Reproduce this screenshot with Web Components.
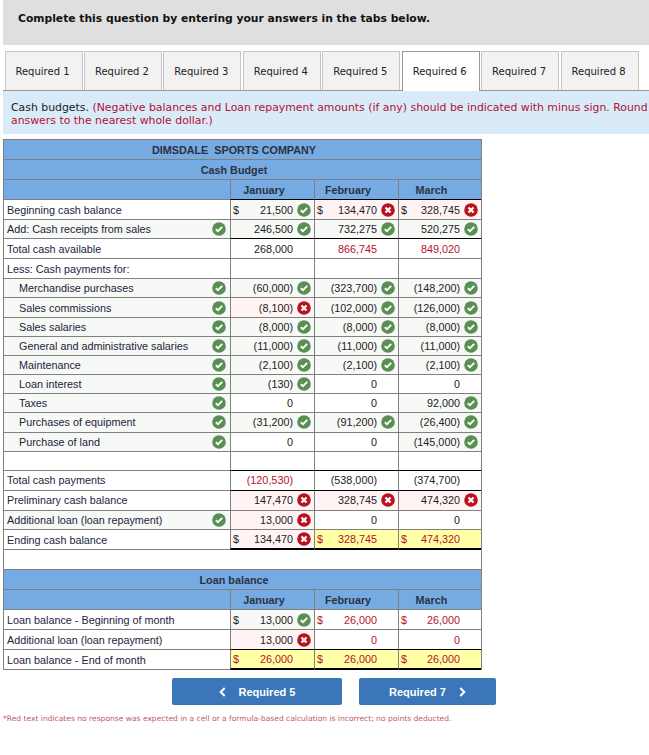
<!DOCTYPE html>
<html>
<head>
<meta charset="utf-8">
<style>
  html, body { margin: 0; padding: 0; background: #fff; overflow: hidden; }
  body { width: 649px; height: 755px; }
</style>
</head>
<body>
<quiz-page>
  <span slot="prompt">Complete this question by entering your answers in the tabs below.</span>
  <tab-bar slot="tabs" active="6" count="8"></tab-bar>
  <instruction-band slot="band" lead="Cash budgets."><span>(Negative balances and Loan repayment amounts (if any) should be indicated with minus sign. Round<br>answers to the nearest whole dollar.)</span></instruction-band>
  <budget-sheet slot="sheet"></budget-sheet>
  <nav-button slot="prev" dir="prev" style="width:170px">Required 5</nav-button>
  <nav-button slot="next" dir="next" style="width:137px">Required 7</nav-button>
  <span slot="note">*Red text indicates no response was expected in a cell or a formula-based calculation is incorrect; no points deducted.</span>
</quiz-page>

<script>
class StatusMark extends HTMLElement {
  connectedCallback() {
    if (this.shadowRoot) return;
    this.attachShadow({ mode: "open" });
    const ok = this.getAttribute("kind") === "ok";
    this.shadowRoot.innerHTML = `
    <style>
      :host { display: block; width: 14px; height: 14px; flex: none; }
      svg { display: block; }
    </style>
    <svg width="14" height="14" viewBox="0 0 14 14">
      <circle cx="7" cy="7" r="6.8" fill="${ok ? "#5a8f54" : "#b8121f"}"/>
      ${ok
        ? '<path d="M3.8 7.2 6 9.2 10.2 4.9" fill="none" stroke="#fff" stroke-width="1.9"/>'
        : '<path d="M4.5 4.5 9.5 9.5M9.5 4.5 4.5 9.5" fill="none" stroke="#fff" stroke-width="2.2"/>'}
    </svg>`;
  }
}
customElements.define("status-mark", StatusMark);

class TabBar extends HTMLElement {
  connectedCallback() {
    this.attachShadow({ mode: "open" });
    const active = +this.getAttribute("active");
    let tabs = "";
    for (let i = 1; i <= +this.getAttribute("count"); i++) {
      tabs += `<div class="tab${i === active ? " on" : ""}">Required ${i}</div>`;
    }
    this.shadowRoot.innerHTML = `
    <style>
      :host {
        display: flex;
        gap: 1.45px;
        height: 40px;
        box-sizing: border-box;
        padding-left: 1.5px;
        border-bottom: 1px solid #999;
        font: 10px "DejaVu Sans", sans-serif;
        color: #222;
      }
      .tab {
        width: 78px;
        height: 39px;
        box-sizing: border-box;
        display: flex;
        align-items: center;
        justify-content: center;
        padding-right: 2px;
        background: #f2f2f2;
        border: 1px solid #c6c6c6;
        border-bottom: 0;
      }
      .on {
        height: 40px;
        background: #fff;
        border-color: #999;
        z-index: 1;
      }
    </style>
    ${tabs}`;
  }
}
customElements.define("tab-bar", TabBar);

class InstructionBand extends HTMLElement {
  connectedCallback() {
    this.attachShadow({ mode: "open" });
    this.shadowRoot.innerHTML = `
    <style>
      :host {
        display: block;
        height: 43px;
        box-sizing: border-box;
        padding: 10px 0 0 8px;
        background: #d9ebf9;
        font: 10.88px/13px "DejaVu Sans", sans-serif;
        color: #222;
        white-space: nowrap;
        overflow: hidden;
      }
      ::slotted(span) { color: #b01136; }
    </style>
    ${this.getAttribute("lead")} <slot></slot>`;
  }
}
customElements.define("instruction-band", InstructionBand);

// row: height, label, indent, label mark, cells, bottom line of the value cells
// cell text: $ = dollar sign, ~ = red text, * = yellow, trailing + / x = mark
const OK = "ok";
const rows = [
  { h: 20, title: "DIMSDALE&nbsp; SPORTS COMPANY" },
  { h: 20, title: "Cash Budget" },
  { h: 20, head: ["January", "February", "March"], line: "k" },
  { h: 20, label: "Beginning cash balance", cells: ["$21,500+", "$134,470x", "$328,745x"] },
  { h: 19, label: "Add: Cash receipts from sales", mark: OK, cells: ["246,500+", "732,275+", "520,275+"], line: "k" },
  { h: 20, label: "Total cash available", cells: ["268,000", "~866,745", "~849,020"] },
  { h: 20, label: "Less: Cash payments for:", cells: ["", "", ""] },
  { h: 19, label: "Merchandise purchases", indent: 1, mark: OK, cells: ["(60,000)+", "(323,700)+", "(148,200)+"] },
  { h: 20, label: "Sales commissions", indent: 1, mark: OK, cells: ["(8,100)x", "(102,000)+", "(126,000)+"] },
  { h: 19, label: "Sales salaries", indent: 1, mark: OK, cells: ["(8,000)+", "(8,000)+", "(8,000)+"] },
  { h: 19, label: "General and administrative salaries", indent: 1, mark: OK, cells: ["(11,000)+", "(11,000)+", "(11,000)+"] },
  { h: 19, label: "Maintenance", indent: 1, mark: OK, cells: ["(2,100)+", "(2,100)+", "(2,100)+"] },
  { h: 19, label: "Loan interest", indent: 1, mark: OK, cells: ["(130)+", "0", "0"] },
  { h: 19, label: "Taxes", indent: 1, mark: OK, cells: ["0", "0", "92,000+"] },
  { h: 20, up: 1, label: "Purchases of equipment", indent: 1, mark: OK, cells: ["(31,200)+", "(91,200)+", "(26,400)+"] },
  { h: 19, label: "Purchase of land", indent: 1, mark: OK, cells: ["0", "0", "(145,000)+"] },
  { h: 19, label: "", cells: ["", "", ""], line: "k" },
  { h: 20, up: 1, label: "Total cash payments", cells: ["~(120,530)", "(538,000)", "(374,700)"], line: "k" },
  { h: 20, up: 1, label: "Preliminary cash balance", cells: ["147,470x", "328,745x", "474,320x"] },
  { h: 19, label: "Additional loan (loan repayment)", mark: OK, cells: ["13,000x", "0", "0"] },
  { h: 20, label: "Ending cash balance", cells: ["$134,470x", "*~$328,745", "*~$474,320"], line: "K" },
  { h: 20, blank: true },
  { h: 20, title: "Loan balance" },
  { h: 20, head: ["January", "February", "March"] },
  { h: 20, label: "Loan balance - Beginning of month", cells: ["$13,000+", "~$26,000", "~$26,000"] },
  { h: 20, label: "Additional loan (loan repayment)", cells: ["13,000x", "~0", "~0"], line: "k" },
  { h: 20, label: "Loan balance - End of month", cells: ["*~$26,000", "*~$26,000", "*~$26,000"], line: "K" },
];

function cellHtml(text, line, up) {
  let cls = "val " + (line || "") + (up ? " up" : "");
  let t = text;
  if (t.startsWith("*")) { cls += " yellow"; t = t.slice(1); }
  if (t.startsWith("~")) { cls += " red"; t = t.slice(1); }
  let mark = "";
  if (t.endsWith("+")) { mark = "ok"; cls += " good"; t = t.slice(0, -1); }
  if (t.endsWith("x")) { mark = "no"; cls += " bad"; t = t.slice(0, -1); }
  let dollar = "";
  if (t.startsWith("$")) { dollar = '<span class="dollar">$</span>'; t = t.slice(1); }
  return `<div class="${cls}">${dollar}<span class="num">${t}</span><span class="slot">${mark ? `<status-mark kind="${mark}"></status-mark>` : ""}</span></div>`;
}

class BudgetSheet extends HTMLElement {
  connectedCallback() {
    this.attachShadow({ mode: "open" });
    let html = "";
    for (const r of rows) {
      const style = `style="height:${r.h}px"`;
      if (r.blank) {
        html += `<div class="row wide" ${style}></div>`;
      } else if (r.title) {
        html += `<div class="row wide blue head" ${style}>${r.title}</div>`;
      } else if (r.head) {
        html += `<div class="row" ${style}><div class="lab blue"></div>` +
          r.head.map((m) => `<div class="val blue month head ${r.line || ""}">${m}</div>`).join("") + `</div>`;
      } else {
        html += `<div class="row" ${style}><div class="lab${r.mark ? " good" : ""}${r.indent ? " indent" : ""}${r.up ? " up" : ""}"><span>${r.label}</span>` +
          (r.mark ? `<status-mark kind="${r.mark}"></status-mark>` : "") + `</div>` +
          r.cells.map((c) => cellHtml(c, r.line, r.up)).join("") + `</div>`;
      }
    }
    this.shadowRoot.innerHTML = `
    <style>
      :host {
        display: block;
        width: 479px;
        box-sizing: border-box;
        border-top: 1px solid #808080;
        border-left: 1px solid #808080;
        border-right: 1px solid #808080;
        font: 10.8px "Liberation Sans", sans-serif;
        color: #222;
      }
      .row {
        display: grid;
        grid-template-columns: 226px 84px 84px 83px;
      }
      .wide {
        display: flex;
        align-items: center;
        justify-content: center;
        box-sizing: border-box;
        padding-right: 17px;
        border-bottom: 1px solid #808080;
      }
      .head { font-weight: bold; color: #2b3240; }
      .blue { background: #75aae3; }
      .lab, .val {
        box-sizing: border-box;
        display: flex;
        align-items: center;
        border-bottom: 1px solid #808080;
      }
      .lab { padding: 0 4px 0 3px; justify-content: space-between; color: #1c2340; }
      .indent { padding-left: 15px; }
      .val { border-left: 1px solid #808080; padding-left: 2px; }
      .month { justify-content: center; padding: 0 17px 0 0; }
      .up { padding-bottom: 1px; }
      .k { border-bottom-color: #000; }
      .K { border-bottom: 2px solid #000; }
      .good { background: #f6f9f5; }
      .bad { background: #fff4f3; }
      .yellow { background: #ffffa6; }
      .red { color: #b5112f; }
      .dollar { flex: none; }
      .num { flex: 1; text-align: right; }
      .slot { flex: none; width: 21px; display: flex; justify-content: flex-end; padding-right: 3px; box-sizing: border-box; }
    </style>
    ${html}`;
  }
}
customElements.define("budget-sheet", BudgetSheet);

class NavButton extends HTMLElement {
  connectedCallback() {
    this.attachShadow({ mode: "open" });
    const prev = this.getAttribute("dir") === "prev";
    const chev = `<svg width="7" height="10" viewBox="0 0 7 10"><path d="${prev ? "M5.7 1 1.7 5 5.7 9" : "M1.3 1 5.3 5 1.3 9"}" fill="none" stroke="#fff" stroke-width="2"/></svg>`;
    this.shadowRoot.innerHTML = `
    <style>
      :host {
        display: flex;
        align-items: center;
        justify-content: center;
        gap: 13px;
        height: 27px;
        background: #3b76b9;
        border-radius: 2px;
        color: #fff;
        font: bold 11px "Liberation Sans", sans-serif;
      }
      svg { display: block; }
    </style>
    ${prev ? chev : ""}<slot></slot>${prev ? "" : chev}`;
  }
}
customElements.define("nav-button", NavButton);

class QuizPage extends HTMLElement {
  connectedCallback() {
    this.attachShadow({ mode: "open" });
    this.shadowRoot.innerHTML = `
    <style>
      :host { display: block; padding-left: 3px; }
      .prompt {
        height: 45px;
        box-sizing: border-box;
        padding: 12px 0 0 15px;
        background: #dfdfdf;
        font: bold 10.75px/14px "DejaVu Sans", sans-serif;
        color: #111;
      }
      .tabs { margin-top: 6px; }
      .sheet { margin-top: 5px; }
      .nav { display: flex; gap: 17px; margin: 8px 0 0 169px; }
      .note {
        margin-top: 8px;
        font: 7.55px/11px "DejaVu Sans", sans-serif;
        color: #bd5a66;
        white-space: nowrap;
      }
    </style>
    <div class="prompt"><slot name="prompt"></slot></div>
    <div class="tabs"><slot name="tabs"></slot></div>
    <slot name="band"></slot>
    <div class="sheet"><slot name="sheet"></slot></div>
    <div class="nav"><slot name="prev"></slot><slot name="next"></slot></div>
    <div class="note"><slot name="note"></slot></div>`;
  }
}
customElements.define("quiz-page", QuizPage);
</script>
</body>
</html>
